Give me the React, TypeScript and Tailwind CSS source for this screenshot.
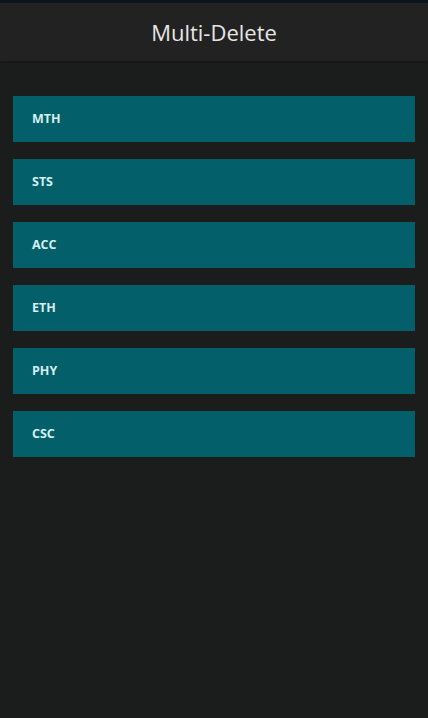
const subjects = ["MTH", "STS", "ACC", "ETH", "PHY", "CSC"];

export default function App() {
  return (
    <div className="flex h-[718px] w-[428px] flex-col bg-[#1b1c1c] font-['Open_Sans',sans-serif]">
      <div className="h-[3px] bg-[#0b1520]" />
      <header className="flex h-[58px] items-center justify-center bg-[#222222] shadow-[0_1px_3px_rgba(0,0,0,0.3)]">
        <h1 className="text-[22px] text-[#e6e6e6]">Multi-Delete</h1>
      </header>
      <ul className="flex flex-col gap-[17px] px-[13px] pt-[35px]">
        {subjects.map((s) => (
          <li
            key={s}
            className="flex h-[46px] items-center bg-[#035f69] pl-[19px] text-[12.5px] font-bold text-[#d6eef0]"
          >
            {s}
          </li>
        ))}
      </ul>
    </div>
  );
}
